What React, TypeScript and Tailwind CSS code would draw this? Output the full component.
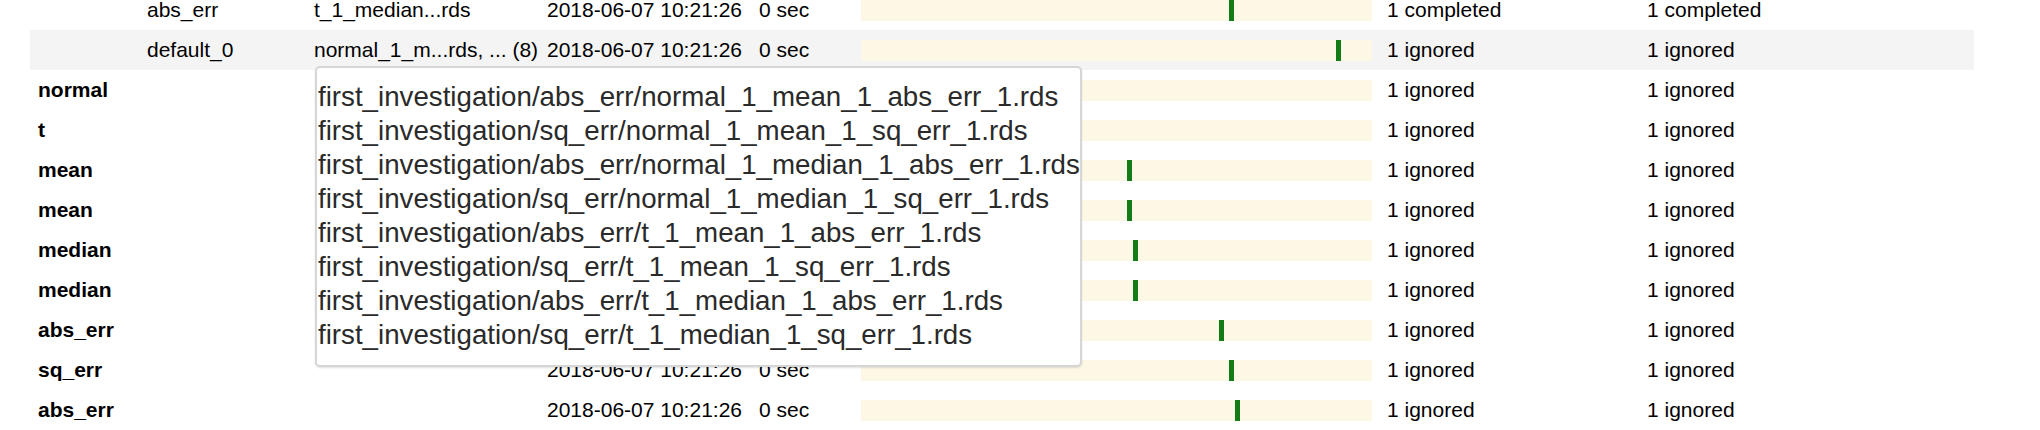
import React from 'react';

interface Run {
  label?: string;
  method?: string;
  file?: string;
  pos: number;
  status: string;
}

const runs: Run[] = [
  { method: 'abs_err', file: 't_1_median...rds', pos: 368, status: '1 completed' },
  { method: 'default_0', file: 'normal_1_m...rds, ... (8)', pos: 475, status: '1 ignored' },
  { label: 'normal', pos: 150, status: '1 ignored' },
  { label: 't', pos: 180, status: '1 ignored' },
  { label: 'mean', pos: 266, status: '1 ignored' },
  { label: 'mean', pos: 266, status: '1 ignored' },
  { label: 'median', pos: 272, status: '1 ignored' },
  { label: 'median', pos: 272, status: '1 ignored' },
  { label: 'abs_err', pos: 358, status: '1 ignored' },
  { label: 'sq_err', pos: 368, status: '1 ignored' },
  { label: 'abs_err', pos: 374, status: '1 ignored' },
];

const files = [
  'first_investigation/abs_err/normal_1_mean_1_abs_err_1.rds',
  'first_investigation/sq_err/normal_1_mean_1_sq_err_1.rds',
  'first_investigation/abs_err/normal_1_median_1_abs_err_1.rds',
  'first_investigation/sq_err/normal_1_median_1_sq_err_1.rds',
  'first_investigation/abs_err/t_1_mean_1_abs_err_1.rds',
  'first_investigation/sq_err/t_1_mean_1_sq_err_1.rds',
  'first_investigation/abs_err/t_1_median_1_abs_err_1.rds',
  'first_investigation/sq_err/t_1_median_1_sq_err_1.rds',
];

function Row({ run, idx }: { run: Run; idx: number }) {
  return (
    <div className={`flex h-[40px] items-center whitespace-nowrap ${idx === 1 ? 'bg-[#f4f4f4]' : ''}`}>
      <div className="w-[109px] pl-2 font-bold">{run.label}</div>
      <div className="w-[167px] pl-2">{run.method}</div>
      <div className="w-[233px] pl-2">{run.file}</div>
      <div className="w-[212px] pl-2">2018-06-07 10:21:26</div>
      <div className="w-[102px] pl-2">0 sec</div>
      <div className="w-[526px] pl-2">
        <div className="relative h-[21px] w-[511px] bg-[#fdf7e6]">
          <div className="absolute top-0 h-full w-[5px] bg-[#137c16]" style={{ left: run.pos }} />
        </div>
      </div>
      <div className="w-[260px] pl-2">{run.status}</div>
      <div className="w-[335px] pl-2">{run.status}</div>
    </div>
  );
}

export default function App() {
  return (
    <div className="h-[430px] w-[2040px] overflow-hidden bg-white font-['Liberation_Sans',Arial,sans-serif] text-[21px] text-black">
      <div className="relative -mt-[10px] ml-[30px] w-[1944px]">
        {runs.map((run, i) => (
          <Row key={i} run={run} idx={i} />
        ))}

        {/* file list tooltip */}
        <div className="absolute left-[285px] top-[76px] h-[301px] w-[767px] overflow-hidden rounded-[5px] border-2 border-[#d6d6d6] bg-white pt-[12px] pl-[1px] text-[27.7px] leading-[34px] text-[#2a2a2a] shadow-[0_1px_2px_rgba(0,0,0,0.12)]">
          {files.map((f) => (
            <div key={f} className="whitespace-nowrap">
              {f}
            </div>
          ))}
        </div>
      </div>
    </div>
  );
}
